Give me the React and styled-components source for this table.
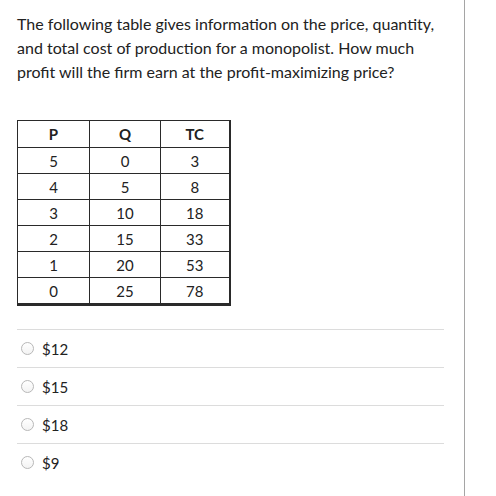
import React from 'react'
import styled, { createGlobalStyle } from 'styled-components'

const Global = createGlobalStyle`
  html, body { margin: 0; padding: 0; background: #fff; }
  body { font-family: Lato, "Open Sans", sans-serif; color: #2d3b45; }
`

const rows = [
  [5, 0, 3],
  [4, 5, 8],
  [3, 10, 18],
  [2, 15, 33],
  [1, 20, 53],
  [0, 25, 78],
]

const widths = [72, 71, 69]

const answers = ['$12', '$15', '$18', '$9']

function App() {
  return (
    <Page>
      <Global />
      <Column>
        <Question>
          The following table gives information on the price, quantity, and total cost of
          production for a monopolist. How much profit will the firm earn at the
          profit-maximizing price?
        </Question>
        <DataTable>
          <colgroup>
            {widths.map((w, i) => (
              <col key={i} style={{ width: w }} />
            ))}
          </colgroup>
          <thead>
            <tr>
              <Th>P</Th>
              <Th>Q</Th>
              <Th>TC</Th>
            </tr>
          </thead>
          <tbody>
            {rows.map((r, i) => (
              <tr key={i}>
                {r.map((v, j) => (
                  <Td key={j}>{v}</Td>
                ))}
              </tr>
            ))}
          </tbody>
        </DataTable>
        <Answers>
          {answers.map((a) => (
            <Answer key={a}>
              <Radio />
              <span>{a}</span>
            </Answer>
          ))}
        </Answers>
      </Column>
    </Page>
  )
}

const Page = styled.div`
  width: 496px;
  height: 496px;
  overflow: hidden;
`

const Column = styled.div`
  width: 447px;
  height: 496px;
  padding-left: 17px;
  border-right: 1px solid #a5a5a5;
`

const Question = styled.p`
  margin: 0;
  padding-top: 12px;
  width: 430px;
  font-size: 16px;
  line-height: 24px;
  color: #222;
`

const DataTable = styled.table`
  margin-top: 36px;
  border-collapse: collapse;
  table-layout: fixed;
  width: 212px;
  border-bottom: 3px solid #2a2a2a;
  border-right: 2px solid #2a2a2a;
  font-family: Lato, "Open Sans", sans-serif;
  color: #222;
`

const Th = styled.th`
  height: 26px;
  border: 1px solid #2a2a2a;
  font-size: 15px;
  font-weight: 700;
  text-align: center;
  padding: 0;
`

const Td = styled.td`
  height: 25px;
  border: 1px solid #2a2a2a;
  font-size: 15px;
  text-align: center;
  padding: 0;
`

const Answers = styled.div`
  margin-top: 23px;
  width: 427px;
`

const Answer = styled.label`
  display: flex;
  align-items: center;
  gap: 8px;
  height: 37px;
  border-top: 1px solid #dcdcdc;
  padding-left: 4px;
  font-size: 15px;
  color: #222;
`

const Radio = styled.span`
  width: 11px;
  height: 11px;
  border-radius: 50%;
  border: 1px solid #b8b8b8;
  background: linear-gradient(#fff, #f3f3f3);
`

export default App
